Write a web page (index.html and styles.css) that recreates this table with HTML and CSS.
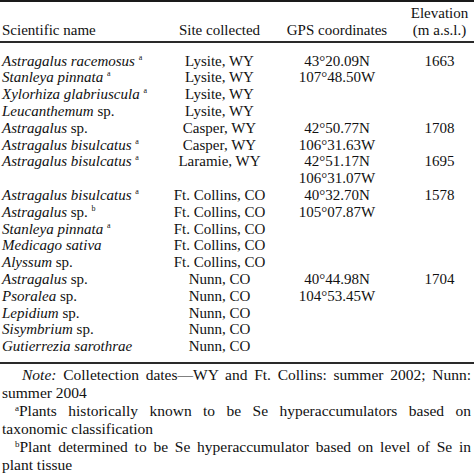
FILE: index.html
```html
<!DOCTYPE html>
<html>
<head>
<meta charset="utf-8">
<link rel="stylesheet" href="styles.css">
</head>
<body>
<div class="page">
<table class="data">
<colgroup>
<col class="c1"><col class="c2"><col class="c3"><col class="c4">
</colgroup>
<thead>
<tr>
<th class="left">Scientific name</th>
<th>Site collected</th>
<th>GPS coordinates</th>
<th>Elevation<br>(m a.s.l.)</th>
</tr>
</thead>
<tbody>
<tr class="first"><td class="left"><i>Astragalus racemosus</i> <sup>a</sup></td><td>Lysite, WY</td><td>43°20.09N</td><td>1663</td></tr>
<tr><td class="left"><i>Stanleya pinnata</i> <sup>a</sup></td><td>Lysite, WY</td><td>107°48.50W</td><td></td></tr>
<tr><td class="left"><i>Xylorhiza glabriuscula</i> <sup>a</sup></td><td>Lysite, WY</td><td></td><td></td></tr>
<tr><td class="left"><i>Leucanthemum</i> sp.</td><td>Lysite, WY</td><td></td><td></td></tr>
<tr><td class="left"><i>Astragalus</i> sp.</td><td>Casper, WY</td><td>42°50.77N</td><td>1708</td></tr>
<tr><td class="left"><i>Astragalus bisulcatus</i> <sup>a</sup></td><td>Casper, WY</td><td>106°31.63W</td><td></td></tr>
<tr><td class="left"><i>Astragalus bisulcatus</i> <sup>a</sup></td><td>Laramie, WY</td><td>42°51.17N</td><td>1695</td></tr>
<tr><td class="left"></td><td></td><td>106°31.07W</td><td></td></tr>
<tr><td class="left"><i>Astragalus bisulcatus</i> <sup>a</sup></td><td>Ft. Collins, CO</td><td>40°32.70N</td><td>1578</td></tr>
<tr><td class="left"><i>Astragalus</i> sp. <sup>b</sup></td><td>Ft. Collins, CO</td><td>105°07.87W</td><td></td></tr>
<tr><td class="left"><i>Stanleya pinnata</i> <sup>a</sup></td><td>Ft. Collins, CO</td><td></td><td></td></tr>
<tr><td class="left"><i>Medicago sativa</i></td><td>Ft. Collins, CO</td><td></td><td></td></tr>
<tr><td class="left"><i>Alyssum</i> sp.</td><td>Ft. Collins, CO</td><td></td><td></td></tr>
<tr><td class="left"><i>Astragalus</i> sp.</td><td>Nunn, CO</td><td>40°44.98N</td><td>1704</td></tr>
<tr><td class="left"><i>Psoralea</i> sp.</td><td>Nunn, CO</td><td>104°53.45W</td><td></td></tr>
<tr><td class="left"><i>Lepidium</i> sp.</td><td>Nunn, CO</td><td></td><td></td></tr>
<tr><td class="left"><i>Sisymbrium</i> sp.</td><td>Nunn, CO</td><td></td><td></td></tr>
<tr class="last"><td class="left"><i>Gutierrezia sarothrae</i></td><td>Nunn, CO</td><td></td><td></td></tr>
</tbody>
</table>
<div class="notes">
<p class="note"><i>Note:</i> Colletection dates—WY and Ft. Collins: summer 2002; Nunn: summer 2004</p>
<p class="foot"><sup>a</sup>Plants historically known to be Se hyperaccumulators based on taxonomic classification</p>
<p class="foot"><sup>b</sup>Plant determined to be Se hyperaccumulator based on level of Se in plant tissue</p>
</div>
</div>
</body>
</html>
```
FILE: styles.css
```css
html, body {
  margin: 0;
  padding: 0;
  background: #ffffff;
}
.page {
  width: 474px;
  font-family: "Liberation Serif", "Times New Roman", serif;
  color: #111111;
}
.data {
  width: 474px;
  border-collapse: collapse;
  table-layout: fixed;
  font-size: 15px;
  line-height: 16.8px;
  border-top: 2px solid #1a1a1a;
  border-bottom: 2px solid #2a2a2a;
}
.c1 { width: 170px; }
.c2 { width: 99px; }
.c3 { width: 136px; }
.c4 { width: 69px; }
.data th {
  font-weight: normal;
  text-align: center;
  vertical-align: bottom;
  padding: 3px 0 2.5px 0;
  border-bottom: 2px solid #2a2a2a;
  white-space: nowrap;
}
.data td {
  text-align: center;
  padding: 0;
  white-space: nowrap;
}
.data .left {
  text-align: left;
  padding-left: 2px;
}
.data tr.first td { padding-top: 9.5px; }
.data tr.last td { padding-bottom: 7px; }
.data sup {
  font-size: 8px;
  line-height: 0;
  vertical-align: 6px;
  font-style: normal;
}
.notes {
  padding: 2px 3px 0 2px;
  font-size: 15.5px;
  line-height: 18px;
}
.notes p {
  margin: 0;
  text-align: justify;
}
.note { text-indent: 20px; }
.foot { text-indent: 13px; }
.notes sup {
  font-size: 9px;
  line-height: 0;
  vertical-align: 5px;
}
```
